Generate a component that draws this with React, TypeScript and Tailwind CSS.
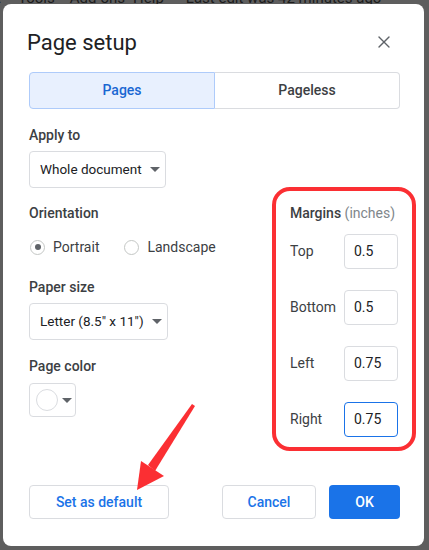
import { X } from 'lucide-react'

const font = { fontFamily: 'Roboto, "Liberation Sans", sans-serif' }

function Caret() {
  return (
    <svg width="10" height="5" viewBox="0 0 10 5" className="shrink-0">
      <path d="M0 0h10L5 5z" fill="#5f6368" />
    </svg>
  )
}

function Select({ label, width }: { label: string; width: string }) {
  return (
    <div className={`flex items-center gap-[8px] h-[37px] ${width} pl-[10px] pr-[8px] border border-[#dadce0] rounded-[4px] text-[13.5px] text-[#202124] whitespace-nowrap`}>
      <span>{label}</span>
      <Caret />
    </div>
  )
}

function Radio({ checked, label }: { checked?: boolean; label: string }) {
  return (
    <div className="flex items-center gap-[8px] text-[14px] text-[#3c4043]">
      <span className="w-[15px] h-[15px] rounded-full border border-[#c4c7c5] flex items-center justify-center">
        {checked && <span className="w-[6px] h-[6px] rounded-full bg-[#5f6368]" />}
      </span>
      {label}
    </div>
  )
}

function MarginRow({ label, value, focused }: { label: string; value: string; focused?: boolean }) {
  return (
    <div className="flex items-center h-[35px]">
      <span className="w-[54px] text-[14px] text-[#3c4043]">{label}</span>
      <div
        className={`w-[54px] h-[35px] flex items-center pl-[9px] rounded-[4px] text-[14px] text-[#202124] ${
          focused ? 'border-[1.5px] border-[#1a73e8]' : 'border border-[#dadce0]'
        }`}
      >
        {value}
      </div>
    </div>
  )
}

export default function App() {
  return (
    <div className="relative w-[429px] h-[550px] bg-[#5e5e5e] overflow-hidden" style={font}>
      {/* document menu peeking above the dialog */}
      <div className="h-[4px] overflow-hidden">
        <div className="flex mt-[-13px] text-[15px] text-[#1c1c1c] whitespace-nowrap">
          <span className="ml-[-4px]">t</span>
          <span className="ml-[17px]">Tools</span>
          <span className="ml-[15px]">Add-ons</span>
          <span className="ml-[8px]">Help</span>
          <span className="ml-[22px]">Last edit was 42 minutes ago</span>
        </div>
      </div>

      {/* dialog */}
      <div className="ml-[3px] w-[421px] h-[542px] bg-white rounded-[8px] flex flex-col pt-[23px] pl-[26px] pr-[24px] pb-[27px]">
        <div className="flex items-center justify-between h-[30px]">
          <h1 className="text-[22px] text-[#202124] ml-[-2px]">Page setup</h1>
          <X size={20} strokeWidth={1.6} className="text-[#5f6368] mr-[6px]" />
        </div>

        <div className="flex mt-[15px] h-[37px] text-[14px] font-medium">
          <div className="flex-1 flex items-center justify-center bg-[#e8f0fe] border border-[#aecbfa] rounded-l-[4px] text-[#1967d2]">
            Pages
          </div>
          <div className="flex-1 flex items-center justify-center border border-l-0 border-[#dadce0] rounded-r-[4px] text-[#3c4043]">
            Pageless
          </div>
        </div>

        <div className="flex">
          <div className="flex-1 flex flex-col pt-[16px] text-[14px]">
            <div className="h-[20px] font-medium text-[#3c4043]">Apply to</div>
            <div className="mt-[6px]">
              <Select label="Whole document" width="w-[137px]" />
            </div>
            <div className="mt-[15px] h-[20px] font-medium text-[#3c4043]">Orientation</div>
            <div className="flex items-center gap-[25px] mt-[14px] h-[20px] ml-[1px]">
              <Radio checked label="Portrait" />
              <Radio label="Landscape" />
            </div>
            <div className="mt-[20px] h-[20px] font-medium text-[#3c4043]">Paper size</div>
            <div className="mt-[6px]">
              <Select label={'Letter (8.5" x 11")'} width="w-[139px]" />
            </div>
            <div className="mt-[16px] h-[20px] font-medium text-[#3c4043]">Page color</div>
            <div className="mt-[7px] w-[47px] h-[34px] border border-[#dadce0] rounded-[4px] flex items-center pl-[6px] gap-[4px]">
              <span className="w-[22px] h-[22px] rounded-full border border-[#dadce0] bg-white" />
              <Caret />
            </div>
          </div>

          {/* margins, circled in red */}
          <div className="w-[144px] mr-[-16px] mt-[78px] border-[4px] border-[#fb2f33] rounded-[18px] pt-[12px] pl-[14px] pr-[14px] pb-[10px] flex flex-col">
            <div className="h-[20px] text-[14px] whitespace-nowrap">
              <span className="font-medium text-[#3c4043]">Margins</span>{' '}
              <span className="text-[#80868b]">(inches)</span>
            </div>
            <div className="mt-[11px] flex flex-col gap-[21px]">
              <MarginRow label="Top" value="0.5" />
              <MarginRow label="Bottom" value="0.5" />
              <MarginRow label="Left" value="0.75" />
              <MarginRow label="Right" value="0.75" focused />
            </div>
          </div>
        </div>

        <div className="mt-auto flex items-center h-[34px] text-[14px] font-medium">
          <button className="w-[140px] h-[34px] border border-[#dadce0] rounded-[4px] text-[#1a73e8]">
            Set as default
          </button>
          <div className="flex-1" />
          <button className="w-[94px] h-[34px] border border-[#dadce0] rounded-[4px] text-[#1a73e8]">
            Cancel
          </button>
          <button className="ml-[13px] w-[71px] h-[34px] bg-[#1a73e8] rounded-[4px] text-white">OK</button>
        </div>
      </div>

      {/* red annotation arrow */}
      <svg className="absolute left-[130px] top-[400px]" width="70" height="95" viewBox="0 0 70 95">
        <polygon points="62,4 65,6 25,71 18,65" fill="#fb2f33" />
        <polygon points="7,90 11,61 34,76" fill="#fb2f33" />
      </svg>
    </div>
  )
}
